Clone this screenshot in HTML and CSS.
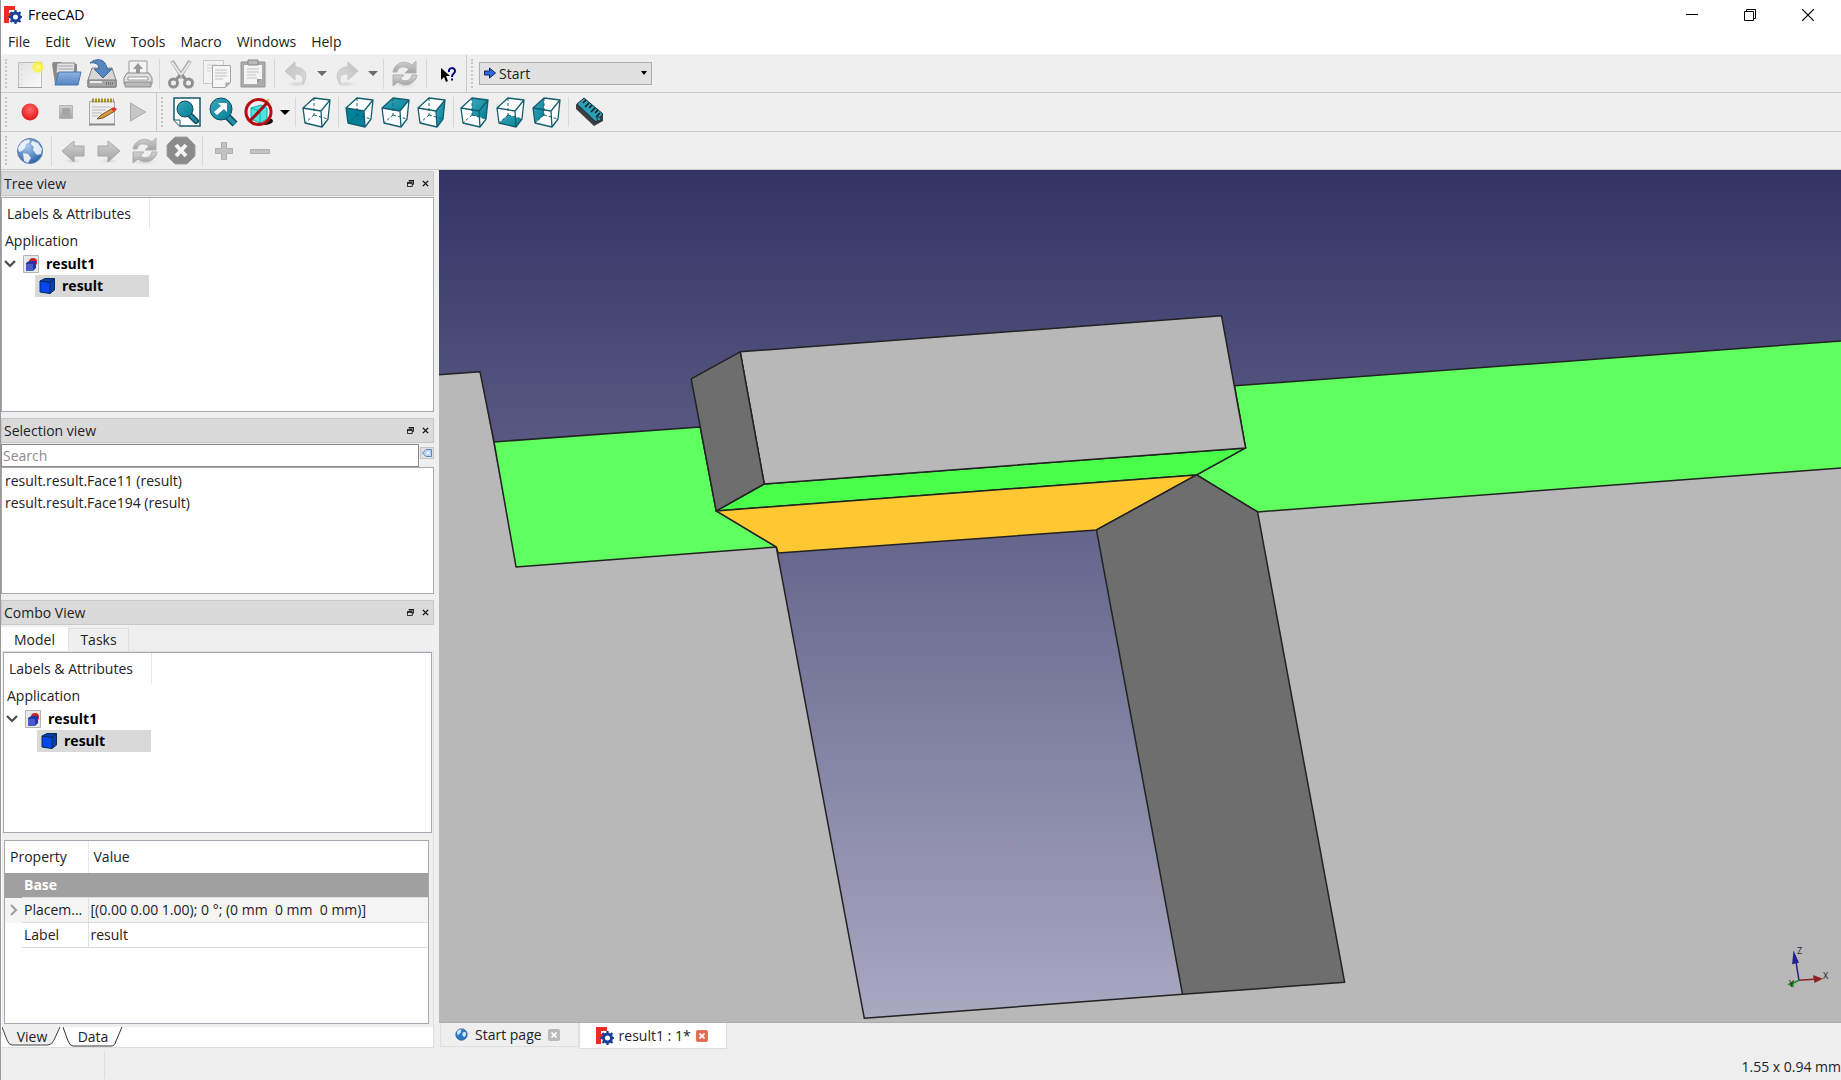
FILE: index.html
```
<!DOCTYPE html>
<html lang="en">
<head>
    <meta charset="UTF-8">
    <meta name="viewport" content="width=device-width, initial-scale=1.0">
    <title>FreeCAD</title>
    <link rel="stylesheet" href="styles.css">
</head>
<body>
    <!-- Shared icons -->
    <svg class="sprite" width="0" height="0" aria-hidden="true">
        <defs>
            <linearGradient id="grey" x1="0" y1="0" x2="0" y2="1"><stop offset="0" stop-color="#d2d2d2"/><stop offset="1" stop-color="#a2a2a2"/></linearGradient>
            <linearGradient id="light" x1="0" y1="0" x2="1" y2="1"><stop offset="0" stop-color="#c0c0c0"/><stop offset="1" stop-color="#dedede"/></linearGradient>
            <linearGradient id="pale" x1="0" y1="0" x2="1" y2="1"><stop offset="0" stop-color="#e2e2e2"/><stop offset="1" stop-color="#fafafa"/></linearGradient>
            <linearGradient id="blue" x1="0" y1="0" x2="0" y2="1"><stop offset="0" stop-color="#8ab4e2"/><stop offset="1" stop-color="#5585c2"/></linearGradient>
            <linearGradient id="teal" x1="0" y1="0" x2="1" y2="1"><stop offset="0" stop-color="#3ea6bc"/><stop offset="1" stop-color="#007f95"/></linearGradient>
            <radialGradient id="red" cx=".5" cy=".35" r=".6"><stop offset="0" stop-color="#ff6a6a"/><stop offset="1" stop-color="#e21c20"/></radialGradient>
            <radialGradient id="sun"><stop offset="0" stop-color="#fffcb0"/><stop offset=".5" stop-color="#fbf13a"/><stop offset="1" stop-color="#fbf13a" stop-opacity="0"/></radialGradient>
            <radialGradient id="shade"><stop offset="0" stop-color="#cfcfcf"/><stop offset="1" stop-color="#efefef" stop-opacity="0"/></radialGradient>
            <radialGradient id="sea" cx=".4" cy=".3" r=".7"><stop offset="0" stop-color="#a9c8ec"/><stop offset="1" stop-color="#2f66ad"/></radialGradient>
        </defs>
        <symbol id="logo" viewBox="0 0 18 18">
            <path d="M0 0h11v4H5v3h4v4H5v6H0z" fill="#f02a1c"/>
            <circle cx="11.500" cy="11" r="4" fill="none" stroke="#1a3f9c" stroke-width="3"/>
            <path d="M11.500 4v3M11.500 15v3M4.500 11h3M15.500 11h3M6.500 6l2 2M14.500 14l2 2M6.500 16l2-2M14.500 8l2-2" stroke="#1a3f9c" stroke-width="2.200"/>
        </symbol>
        <symbol id="cube-body" viewBox="0 0 32 32"><path d="M2 12 13 2 29 4 27 23 21 31 4 27z" fill="#fff"/></symbol>
        <symbol id="cube" viewBox="0 0 32 32">
            <path d="M13 19 4 27M13 19l14 4M13 2v17" fill="none" stroke="#135e6e" stroke-dasharray="3 2"/>
            <path d="M2 12 20 15 21 31 4 27zM2 12 13 2 29 4 20 15M29 4 27 23 21 31" fill="none" stroke="#135e6e" stroke-width="1.300" stroke-linejoin="round"/>
        </symbol>
        <symbol id="refresh" viewBox="0 0 32 32">
            <ellipse cx="16" cy="27" rx="14" ry="4" fill="url(#shade)"/>
            <path d="M4 14C5 6 15 1 23 7l4-4v12H16l4-4c-6-4-11-2-12 3z" fill="url(#grey)" stroke="#b4b4b4"/>
            <path d="M28 17c-1 8-11 13-19 7l-5 4V17h11l-4 4c6 4 11 1 12-4z" fill="url(#grey)" stroke="#aeaeae"/>
        </symbol>
        <symbol id="undo" viewBox="0 0 32 32">
            <ellipse cx="17" cy="26" rx="13" ry="4" fill="url(#shade)"/>
            <path d="M5 13 15 4v5c11 0 14 10 7 18 3-8 0-12-7-11v6z" fill="url(#light)" stroke="#c6c6c6"/>
        </symbol>
        <symbol id="arrow" viewBox="0 0 32 32">
            <ellipse cx="16" cy="26" rx="11" ry="3" fill="url(#shade)"/>
            <path d="M5 16 17 6v5h10v10H17v6z" fill="url(#grey)" stroke="#a6a6a6"/>
        </symbol>
        <symbol id="globe" viewBox="0 0 32 32">
            <circle cx="16" cy="16" r="12.500" fill="url(#sea)" stroke="#5d7fae"/>
            <path d="M7 8c3-3 7-4 9-3l-1 3-3 1-1 4-3 3-3 1-1-4zM18 6l6 2 4 6-1 5-4 1-4-5 1-3-3-3zM9 18l5 1 3 4-3 5-4-2z" fill="#f3f7fb" opacity=".9"/>
        </symbol>
        <symbol id="globe-small" viewBox="0 0 16 16">
            <circle cx="8" cy="8" r="6" fill="#2c78c4" stroke="#2a5a9c"/>
            <path d="M3 5c2-2 4-3 5-2l-1 3-3 3zM9 6l3-1 1 3-2 3-2-2z" fill="#cfe6fa"/>
        </symbol>
        <symbol id="float" viewBox="0 0 8 8">
            <path d="M2 .500h5.500V5H6M.500 3H6v4.500H.500z" fill="none" stroke="#111"/><path d="M2 1h6M0 3.500h6" stroke="#111" stroke-width="1.500"/>
        </symbol>
        <symbol id="close" viewBox="0 0 8 8"><path d="M1 1l6 6M7 1 1 7" stroke="#111" stroke-width="1.600"/></symbol>
        <symbol id="chevron" viewBox="0 0 12 12"><path d="M1 3l5 5 5-5" fill="none" stroke="#4a4a4a" stroke-width="2.200"/></symbol>
        <symbol id="document" viewBox="0 0 16 18">
            <path d="M.500.500h15v17H.500z" fill="#e8e8e8" stroke="#b4b4b4"/>
            <circle cx="10" cy="7" r="4" fill="#cc2222"/><path d="M3 8l3-2h7v7l-3 3H3z" fill="#2734a0"/><path d="M3 9h7v7H3z" fill="#4a59cc"/>
        </symbol>
        <symbol id="solid" viewBox="0 0 16 16">
            <path d="M1 3l5-2.500h9.500V12L11 15.500 1 14z" fill="#0a3fae"/><path d="M1 3.500 11 4.500V15.500L1 14z" fill="#0546f0"/><path d="M1 3l5-2.500h9.500L11 4.500zM15.500.500V12L11 15.500V4.500M1 3v11l10 1.500" fill="none" stroke="#062a52"/>
        </symbol>
    </svg>

    <div class="window">
        <header class="title-bar">
            <svg class="app-logo"><use href="#logo"/></svg>
            <span class="app-name">FreeCAD</span>
            <div class="window-buttons">
                <button aria-label="Minimize"><svg width="12" height="12"><path d="M0 5.500h12" stroke="#000"/></svg></button>
                <button aria-label="Restore"><svg width="12" height="12"><path d="M.500 2.500h9v9h-9zM2.500 2.500v-2h9v9h-2" fill="none" stroke="#000"/></svg></button>
                <button aria-label="Close"><svg width="12" height="12"><path d="M0 0l12 12M12 0 0 12" stroke="#000" stroke-width="1.200"/></svg></button>
            </div>
        </header>

        <nav class="menu-bar">
            <button>File</button>
            <button>Edit</button>
            <button>View</button>
            <button>Tools</button>
            <button>Macro</button>
            <button>Windows</button>
            <button>Help</button>
        </nav>

        <div class="toolbar-row">
            <div class="toolbar">
                <button class="tool" aria-label="New"><svg viewBox="0 0 32 32"><path d="M4.500 4.500h23v25h-23z" fill="url(#pale)" stroke="#bdbdbd"/><path d="M4 29.500h24" stroke="#a0a0a0"/><path d="M7.500 6v22" stroke="#cfcfcf" stroke-dasharray="1 4"/><circle cx="24" cy="9" r="7" fill="url(#sun)"/></svg></button>
                <button class="tool" aria-label="Open"><svg viewBox="0 0 32 32"><path d="M2 6l1-2h8l1 2h15v20H5z" fill="#8a8a8a"/><path d="M7 5h18l-1 10H6z" fill="#e6e6e6" stroke="#888"/><path d="M8 8h15M8 11h15" stroke="#a0a0a0"/><path d="M9 14h22l-3 13H5z" fill="url(#blue)" stroke="#4b77b0"/></svg></button>
                <button class="tool" aria-label="Save"><svg viewBox="0 0 32 32"><path d="M6 10h20l4 12v7H2v-7z" fill="#d6d6d6" stroke="#808080"/><path d="M2 22h28v7H2z" fill="#a8a8a8" stroke="#777"/><path d="M4 24h12" stroke="#eee" stroke-width="2"/><path d="M20 25.500h8" stroke="#777" stroke-width="3" stroke-dasharray="1 1"/><path d="M4 5c7-6 16-4 17 6h5l-9 9-9-9h5C13 6 9 4 4 5z" fill="#5586bd" stroke="#3b689f"/></svg></button>
                <button class="tool" aria-label="Print"><svg viewBox="0 0 32 32"><path d="M7 3h18v13H7z" fill="#f4f4f4" stroke="#999"/><path d="M16 5l5 6h-3v5h-4v-5h-3z" fill="#999"/><path d="M5 15h22l3 5v6H2v-6z" fill="#e0e0e0" stroke="#8a8a8a"/><path d="M6 19h20v3H6z" fill="#fff" stroke="#999"/><path d="M3 24h26v5H3z" fill="#b8b8b8" stroke="#8f8f8f"/></svg></button>
                <span class="separator"></span>
                <button class="tool" aria-label="Cut"><svg viewBox="0 0 32 32"><path d="M7 3l11 17M25 3 14 20" stroke="#aaa" stroke-width="4"/><path d="M7 4l11 16M25 4 14 20" stroke="#e8e8e8" stroke-width="2"/><circle cx="8.500" cy="25" r="4" fill="none" stroke="#8f8f8f" stroke-width="3"/><circle cx="23.500" cy="25" r="4" fill="none" stroke="#8f8f8f" stroke-width="3"/><path d="M11 22l4-5M21 22l-4-5" stroke="#8f8f8f" stroke-width="3"/></svg></button>
                <button class="tool" aria-label="Copy"><svg viewBox="0 0 32 32"><path d="M2.500 2.500h20v23h-20z" fill="#f3f3f3" stroke="#cacaca"/><path d="M6 7h10M6 10h6M6 13h4" stroke="#d0d0d0"/><path d="M11.500 7.500h18v17l-5 5h-13z" fill="#f5f5f5" stroke="#a5a5a5"/><path d="M14 12h12M14 15h12M14 18h12M14 21h8" stroke="#c0c0c0"/><path d="M24.500 29.500v-5h5z" fill="#aaa"/></svg></button>
                <button class="tool" aria-label="Paste"><svg viewBox="0 0 32 32"><path d="M4 4h24v25H4z" fill="#ababab" stroke="#959595"/><path d="M7 7h18v14l-5 5H7z" fill="#f4f4f4"/><path d="M11 2h10v5H11z" fill="#b9b9b9" stroke="#888"/><path d="M10 11h12M10 14h12M10 17h9M10 20h10" stroke="#c2c2c2"/><path d="M20 26v-5h5z" fill="#999"/></svg></button>
                <span class="separator"></span>
                <button class="tool" aria-label="Undo"><svg><use href="#undo"/></svg></button>
                <button class="drop disabled" aria-label="Undo list"></button>
                <button class="tool" aria-label="Redo"><svg class="flip"><use href="#undo"/></svg></button>
                <button class="drop disabled" aria-label="Redo list"></button>
                <span class="separator"></span>
                <button class="tool" aria-label="Refresh"><svg><use href="#refresh"/></svg></button>
                <span class="separator"></span>
                <button class="tool" aria-label="What's this"><svg viewBox="0 0 32 32"><path d="M9 10v12l3-3 2 5 2-1-2-5h4z" fill="#000"/><path d="M17 14c-1-5 6-5 6-1 0 3-3 2-3 6M20 20.500v2" fill="none" stroke="#000080" stroke-width="2"/></svg></button>
            </div>
            <div class="toolbar">
                <div class="workbench">
                    <svg viewBox="0 0 12 12"><path d="M.500 4h5V1l6 5-6 5V8h-5z" fill="#2a68e8" stroke="#0b2358"/></svg>
                    <select aria-label="Workbench"><option>Start</option></select>
                </div>
            </div>
        </div>

        <div class="toolbar-row">
            <div class="toolbar">
                <button class="tool" aria-label="Record macro"><svg viewBox="0 0 32 32"><circle cx="16" cy="16" r="8.500" fill="url(#red)"/></svg></button>
                <button class="tool" aria-label="Stop macro"><svg viewBox="0 0 32 32"><path d="M9.500 9.500h13v13h-13z" fill="url(#grey)" stroke="#b5b5b5"/><path d="M12 12h8v8h-8z" fill="#a5a5a5"/></svg></button>
                <button class="tool" aria-label="Macros"><svg viewBox="0 0 32 32"><path d="M3.500 5.500h25v23h-25z" fill="#eee" stroke="#aaa"/><path d="M3 28.500h26" stroke="#888" stroke-width="2"/><path d="M6 4.500h22" stroke="#a39324" stroke-width="4" stroke-dasharray="2 1"/><path d="M6 11h18M6 14h14M6 17h10M6 20h6" stroke="#bbb"/><path d="M11 23l4-4 12-7 2 3-12 7z" fill="#d99a45" stroke="#7d5520"/><path d="M25 13l3-2 3 2-3 3z" fill="#e5352c"/></svg></button>
                <button class="tool" aria-label="Run macro"><svg viewBox="0 0 32 32"><path d="M8.500 7v18l15-9z" fill="#c6c6c6" stroke="#a9a9a9"/></svg></button>
            </div>
            <div class="toolbar">
                <button class="tool" aria-label="Fit all"><svg viewBox="0 0 32 32"><path d="M3 2h26v28H9l-6-6z" fill="#fff" stroke="#14576a" stroke-width="1.500"/><path d="M3 24h6v6" fill="#fff" stroke="#14576a"/><path d="M19 19l6 6" stroke="#0d4c5d" stroke-width="6" stroke-linecap="round"/><path d="M20 20l5 5" stroke="#1f90a8" stroke-width="3" stroke-linecap="round"/><circle cx="14" cy="13" r="8" fill="url(#teal)" stroke="#0d4c5d"/></svg></button>
                <button class="tool" aria-label="Fit selection"><svg viewBox="0 0 32 32"><path d="M20 20l8 8" stroke="#0d4c5d" stroke-width="7"/><path d="M21 21l7 7" stroke="#1f90a8" stroke-width="4"/><circle cx="14" cy="13" r="11" fill="url(#teal)" stroke="#0d4c5d"/><path d="M20 7v9l-3-3-7 6-3-3 7-6-3-3z" fill="#fff"/></svg></button>
                <button class="tool" aria-label="Draw style"><svg viewBox="0 0 32 32"><ellipse cx="21" cy="25" rx="9" ry="4" fill="#111"/><circle cx="16" cy="16" r="12" fill="#efefef"/><path d="M8 12l10-3 6 3v11l-7 4-9-4z" fill="#4ce5e0" stroke="#1ba6a8"/><path d="M8 12l9 3v12" fill="none" stroke="#1ba6a8"/><path d="M20 11l6-8" stroke="#f0c526" stroke-width="2"/><circle cx="15.500" cy="16" r="12.500" fill="none" stroke="#b80d14" stroke-width="3"/><path d="M7 25 24 7" stroke="#a30e14" stroke-width="3"/></svg></button>
                <button class="drop" aria-label="Draw style list"></button>
                <span class="separator"></span>
                <button class="tool" aria-label="Axonometric"><svg viewBox="0 0 32 32"><use href="#cube-body"/><use href="#cube"/></svg></button>
                <span class="separator"></span>
                <button class="tool" aria-label="Front"><svg viewBox="0 0 32 32"><use href="#cube-body"/><path d="M2 12 20 15 21 31 4 27z" fill="#008199"/><use href="#cube"/></svg></button>
                <button class="tool" aria-label="Top"><svg viewBox="0 0 32 32"><use href="#cube-body"/><path d="M2 12 13 2 29 4 20 15z" fill="url(#teal)"/><use href="#cube"/></svg></button>
                <button class="tool" aria-label="Right"><svg viewBox="0 0 32 32"><use href="#cube-body"/><path d="M29 4 27 23 21 31 20 15z" fill="url(#teal)"/><use href="#cube"/></svg></button>
                <span class="separator"></span>
                <button class="tool" aria-label="Rear"><svg viewBox="0 0 32 32"><use href="#cube-body"/><path d="M13 2 29 4 27 23 13 19z" fill="url(#teal)"/><use href="#cube"/></svg></button>
                <button class="tool" aria-label="Bottom"><svg viewBox="0 0 32 32"><use href="#cube-body"/><path d="M13 19 27 23 21 31 4 27z" fill="url(#teal)"/><use href="#cube"/></svg></button>
                <button class="tool" aria-label="Left"><svg viewBox="0 0 32 32"><use href="#cube-body"/><path d="M2 12 13 2V19L4 27z" fill="url(#teal)"/><use href="#cube"/></svg></button>
                <span class="separator"></span>
                <button class="tool" aria-label="Measure"><svg viewBox="0 0 32 32"><path d="M2 8v5l18 17 9-5v-7z" fill="#3a3f41"/><path d="M3 8l7-6 19 16-7 8z" fill="#2ba0b8" stroke="#1c2c30"/><path d="M12 4l-3 3M15 7l-4 4M18 9l-3 3M21 12l-4 4M24 14l-3 3M26 17l-4 4" stroke="#101a1c" stroke-width="1.500"/><circle cx="25" cy="23" r="2" fill="#2ba0b8" stroke="#1c2c30"/></svg></button>
            </div>
        </div>

        <div class="toolbar-row">
            <div class="toolbar">
                <button class="tool" aria-label="Start page"><svg><use href="#globe"/></svg></button>
                <span class="separator"></span>
                <button class="tool" aria-label="Back"><svg><use href="#arrow"/></svg></button>
                <button class="tool" aria-label="Forward"><svg class="flip"><use href="#arrow"/></svg></button>
                <button class="tool" aria-label="Reload"><svg><use href="#refresh"/></svg></button>
                <button class="tool" aria-label="Stop"><svg viewBox="0 0 32 32"><path d="M10 2h12l8 8v11l-8 8H10l-8-8V10z" fill="#8b8b8b" stroke="#a0a0a0"/><path d="M11 10l10 11M21 10 11 21" stroke="#f5f5f5" stroke-width="4"/></svg></button>
                <span class="separator"></span>
                <button class="tool" aria-label="Zoom in"><svg viewBox="0 0 32 32"><path d="M13.500 7.500h5v6h6v5h-6v6h-5v-6h-6v-5h6z" fill="#c2c2c2" stroke="#b0b0b0"/></svg></button>
                <button class="tool" aria-label="Zoom out"><svg viewBox="0 0 32 32"><path d="M6.500 14.500h19v4h-19z" fill="#c2c2c2" stroke="#b0b0b0"/></svg></button>
            </div>
        </div>

        <main class="workspace">
            <aside class="docks">
                <section class="dock tree-dock">
                    <div class="dock-title"><h2>Tree view</h2><button aria-label="Float"><svg><use href="#float"/></svg></button><button aria-label="Close"><svg><use href="#close"/></svg></button></div>
                    <div class="tree">
                        <div class="tree-header">Labels &amp; Attributes</div>
                        <ul>
                            <li class="root">Application</li>
                            <li class="file"><svg class="toggle"><use href="#chevron"/></svg><svg class="doc-icon"><use href="#document"/></svg>result1</li>
                            <li class="item"><svg class="solid-icon"><use href="#solid"/></svg>result</li>
                        </ul>
                    </div>
                </section>

                <section class="dock selection-dock">
                    <div class="dock-title"><h2>Selection view</h2><button aria-label="Float"><svg><use href="#float"/></svg></button><button aria-label="Close"><svg><use href="#close"/></svg></button></div>
                    <div class="search">
                        <input type="text" placeholder="Search" aria-label="Search">
                        <button aria-label="Clear"><svg viewBox="0 0 10 8"><path d="M.500 4 4 .500h5.500v7H4z" fill="#b9d2ef" stroke="#5b87bf"/><path d="M4.500 2.500l3 3M7.500 2.500l-3 3" stroke="#fff"/></svg></button>
                    </div>
                    <ul class="selection-list">
                        <li>result.result.Face11 (result)</li>
                        <li>result.result.Face194 (result)</li>
                    </ul>
                </section>

                <section class="dock combo-dock">
                    <div class="dock-title"><h2>Combo View</h2><button aria-label="Float"><svg><use href="#float"/></svg></button><button aria-label="Close"><svg><use href="#close"/></svg></button></div>
                    <div class="combo-tabs">
                        <button class="active">Model</button>
                        <button>Tasks</button>
                    </div>
                    <div class="combo-page">
                        <div class="tree">
                            <div class="tree-header">Labels &amp; Attributes</div>
                            <ul>
                                <li class="root">Application</li>
                                <li class="file"><svg class="toggle"><use href="#chevron"/></svg><svg class="doc-icon"><use href="#document"/></svg>result1</li>
                                <li class="item"><svg class="solid-icon"><use href="#solid"/></svg>result</li>
                            </ul>
                        </div>
                        <div class="properties">
                            <table>
                                <colgroup><col class="col-toggle"><col class="col-name"><col></colgroup>
                                <thead>
                                    <tr><th colspan="2">Property</th><th>Value</th></tr>
                                </thead>
                                <tbody>
                                    <tr class="group"><td></td><td colspan="2">Base</td></tr>
                                    <tr class="odd"><td class="expand"><svg viewBox="0 0 12 12"><path d="M3 1l5 5-5 5" fill="none" stroke="#a0a0a0" stroke-width="2"/></svg></td><td>Placem...</td><td class="value">[(0.00 0.00 1.00); 0 °; (0 mm  0 mm  0 mm)]</td></tr>
                                    <tr><td></td><td>Label</td><td class="value">result</td></tr>
                                </tbody>
                            </table>
                        </div>
                        <div class="property-tabs">
                            <button><svg viewBox="0 0 60 20" preserveAspectRatio="none"><path d="M0 0l5 13q2 5 5 5h36q4 0 6-5l6-13" fill="#efefef" stroke="#444"/></svg><span>View</span></button>
                            <button><svg viewBox="0 0 60 20" preserveAspectRatio="none"><path d="M0 0l5 14q2 5 5 5h38q4 0 5-5l6-14" fill="#fff" stroke="#333"/></svg><span>Data</span></button>
                        </div>
                    </div>
                </section>
            </aside>

            <section class="document">
                <!-- 3D view -->
                <svg class="viewport" viewBox="440 170 1401 853" preserveAspectRatio="xMidYMid slice" role="img" aria-label="3D view">
                    <defs>
                        <linearGradient id="sky" gradientUnits="userSpaceOnUse" x1="0" y1="170" x2="0" y2="1023"><stop offset="0" stop-color="#333365"/><stop offset="1" stop-color="#a9a9c2"/></linearGradient>
                    </defs>
                    <rect x="440" y="170" width="1401" height="853" fill="url(#sky)"/>
                    <path d="M439 375 481 372 517 567 777 547 865 1018 1345 982 1258 511 1841 468V1023H439z" fill="#b8b8b8"/>
                    <g stroke="#222" stroke-width="1.500" stroke-linejoin="round">
                        <path d="M439 375 481 372 495 442" fill="none"/>
                        <path d="M495 442 701 427 717 511 777 547 517 567z" fill="#5fff5f"/>
                        <path d="M1235 386 1842 341V468L1258 512 1197 475 1246 448z" fill="#5fff5f"/>
                        <path d="M717 511 765 484 1246 448 1197 475z" fill="#4aff4a"/>
                        <path d="M717 511 1197 475 1097 530 779 553 777 547z" fill="#ffc832"/>
                        <path d="M741 352 1222 316 1246 448 765 484z" fill="#b8b8b8"/>
                        <path d="M692 379 741 352 765 484 717 511z" fill="#6e6e6e"/>
                        <path d="M1197 475 1258 512 1345 982 1183 994 1097 530z" fill="#6e6e6e"/>
                        <path d="M777 547 865 1018 1183 994" fill="none"/>
                    </g>
                    <path d="M439 1022.500h1402" stroke="#aaa"/>
                    <!-- Axis cross -->
                    <g stroke-width="1.500">
                        <path d="M1799 980 1795 955" stroke="#22228c"/><path d="M1794 953l4 9-5 1z" fill="#22228c" stroke="#22228c"/>
                        <path d="M1799 980l22-1.500" stroke="#8c2222"/><path d="M1814 976l7 2.500-6 3z" fill="#8c2222" stroke="#8c2222"/>
                        <path d="M1799 980l-8 4" stroke="#228c22"/><path d="M1789 984l4-2v4z" fill="#228c22" stroke="#228c22"/>
                    </g>
                    <g class="axis-label">
                        <text x="1797" y="954">Z</text>
                        <text x="1823" y="979">X</text>
                        <text x="1789" y="987">Y</text>
                    </g>
                </svg>
                <div class="document-tabs">
                    <div class="doc-tab">
                        <svg class="tab-icon"><use href="#globe-small"/></svg>
                        <a href="#">Start page</a>
                        <button class="tab-close" aria-label="Close Start page"><svg viewBox="0 0 6 6"><path d="M.500.500l5 5M5.500.500l-5 5" stroke="#fff" stroke-width="1.600"/></svg></button>
                    </div>
                    <div class="doc-tab active">
                        <svg class="tab-icon"><use href="#logo"/></svg>
                        <a href="#">result1 : 1*</a>
                        <button class="tab-close" aria-label="Close result1"><svg viewBox="0 0 6 6"><path d="M.500.500l5 5M5.500.500l-5 5" stroke="#fff" stroke-width="1.600"/></svg></button>
                    </div>
                </div>
            </section>
        </main>

        <footer class="status-bar">
            <span class="status-message"></span>
            <span class="dimensions">1.55 x 0.94 mm</span>
        </footer>
    </div>
</body>
</html>
```
FILE: styles.css
```
* {
    box-sizing: border-box;
}

html, body {
    margin: 0;
    height: 100%;
}

body {
    background-color: #efefef;
    color: #222;
    font-family: "Open Sans", "Noto Sans", sans-serif;
    font-size: 14px;
    line-height: 20px;
}

button, input, select {
    margin: 0;
    padding: 0;
    border: none;
    background: none;
    color: inherit;
    font: inherit;
}

ul {
    margin: 0;
    padding: 0;
    list-style: none;
}

svg {
    display: block;
}

.sprite {
    position: absolute;
}

.window {
    display: flex;
    flex-direction: column;
    height: 100vh;
    border-left: 1px solid #999;
    overflow: hidden;
}

/* Title and menu */
.title-bar {
    display: flex;
    align-items: center;
    height: 29px;
    padding-left: 3px;
    background-color: white;
    color: black;
}

.app-logo {
    width: 18px;
    height: 18px;
    margin-right: 6px;
}

.window-buttons {
    display: flex;
    height: 100%;
    margin-left: auto;
    padding-right: 4px;
}

.window-buttons button {
    display: flex;
    align-items: center;
    justify-content: center;
    width: 58px;
}

.menu-bar {
    display: flex;
    gap: 15px;
    height: 26px;
    padding: 0 7px;
    background-color: white;
    border-bottom: 1px solid #f5f5f5;
}

.menu-bar button {
    height: 26px;
}

/* Toolbars */
.toolbar-row {
    display: flex;
    height: 38px;
    border-bottom: 1px solid #c9c9c9;
}

.toolbar-row:nth-of-type(2) {
    height: 39px;
}

.toolbar {
    display: flex;
    align-items: center;
    padding-left: 11px;
    position: relative;
}

.toolbar::before {
    content: "";
    position: absolute;
    left: 4px;
    top: 4px;
    bottom: 4px;
    border-left: 2px dotted #c4c4c4;
}

.toolbar + .toolbar {
    padding-left: 12px;
    border-left: 1px solid #c9c9c9;
}

.tool {
    width: 36px;
    height: 36px;
    padding: 2px;
}

.tool svg {
    width: 32px;
    height: 32px;
}

.flip {
    transform: scaleX(-1);
}

.drop {
    display: flex;
    align-items: center;
    justify-content: center;
    width: 15px;
    height: 36px;
}

.drop::before {
    content: "";
    border: 5px solid transparent;
    border-top-color: black;
    border-bottom: none;
}

.drop.disabled::before {
    border-top-color: #6b6b6b;
}

.separator {
    width: 7px;
    height: 30px;
    background: linear-gradient(#d8d8d8, #d8d8d8) center / 1px 100% no-repeat;
}

.workbench {
    position: relative;
    width: 173px;
}

.workbench svg {
    position: absolute;
    left: 5px;
    top: 5px;
    width: 12px;
    height: 12px;
}

.workbench::after {
    content: "";
    position: absolute;
    right: 5px;
    top: 9px;
    border: 3px solid transparent;
    border-top: 4px solid black;
    border-bottom: none;
}

.workbench select {
    display: block;
    appearance: none;
    width: 100%;
    height: 23px;
    padding-left: 19px;
    background-color: #e1e1e1;
    border: 1px solid #adadad;
    line-height: 20px;
}

/* Docks */
.workspace {
    display: flex;
    flex: 1;
    min-height: 0;
}

.docks {
    display: flex;
    flex-direction: column;
    gap: 6px;
    width: 438px;
    padding: 1px 5px 2px 0;
}

.dock {
    display: flex;
    flex-direction: column;
    min-height: 0;
}

.tree-dock {
    flex: 241;
}

.selection-dock {
    flex: 176;
}

.combo-dock {
    flex: 448;
}

.dock-title {
    display: flex;
    align-items: center;
    flex: none;
    height: 25px;
    padding: 0 0 0 2px;
    background-color: #dadada;
    border: 1px solid #c8c8c8;
}

.dock-title h2 {
    flex: 1;
    margin: 0;
    font-size: 14px;
    font-weight: normal;
}

.dock-title button {
    width: 15px;
    height: 16px;
    padding: 4px;
}

.dock-title svg {
    width: 7px;
    height: 7px;
}

.tree {
    flex: 1;
    margin-top: 1px;
    background-color: white;
    border: 1px solid #a5a8b0;
    overflow: hidden;
}

.tree-header {
    width: 148px;
    height: 31px;
    padding: 0 5px;
    border-right: 1px solid #e8e8e8;
    line-height: 32px;
}

.tree li {
    display: flex;
    align-items: center;
    height: 22px;
}

.tree .root {
    padding-left: 3px;
    height: 24px;
}

.tree .file {
    padding-left: 2px;
    color: black;
    font-weight: bold;
}

.tree .item {
    width: 114px;
    margin-left: 33px;
    padding-left: 4px;
    background-color: #d9d9d9;
    color: black;
    font-weight: bold;
}

.toggle {
    width: 12px;
    height: 12px;
}

.doc-icon {
    width: 16px;
    height: 18px;
    margin: 0 7px;
}

.solid-icon {
    width: 16px;
    height: 16px;
    margin-right: 7px;
}

.search {
    display: flex;
    align-items: flex-start;
    gap: 1px;
    margin-top: 1px;
}

.search input {
    flex: 1;
    height: 23px;
    padding: 0 1px;
    background-color: white;
    border: 1px solid #8a8a8a;
}

.search input::placeholder {
    color: #8c8c8c;
}

.search button {
    width: 14px;
    height: 12px;
    margin-top: 3px;
    padding: 1px;
    background-color: #e1e1e1;
    border: 1px solid #c4c4c4;
}

.search svg {
    width: 10px;
    height: 8px;
}

.selection-list {
    flex: 1;
    padding: 2px 3px;
    background-color: white;
    border: 1px solid #a5a8b0;
}

.selection-list li {
    line-height: 22px;
}

.combo-tabs {
    display: flex;
    align-items: flex-end;
    height: 26px;
}

.combo-tabs button {
    width: 61px;
    height: 23px;
    border: 1px solid #dedede;
    border-bottom: none;
}

.combo-tabs .active {
    width: 67px;
    height: 24px;
    background-color: white;
    border-color: white;
}

.combo-page {
    display: flex;
    flex: 1;
    flex-direction: column;
    min-height: 0;
    border: 1px solid #dedede;
    border-left-color: white;
}

.combo-page .tree {
    flex: 181;
    margin: 0 1px 7px 1px;
}

.properties {
    flex: 185;
    min-height: 0;
    margin: 0 4px 3px 2px;
    background-color: white;
    border: 1px solid #a5a8b0;
}

table {
    width: 100%;
    border-collapse: collapse;
    table-layout: fixed;
}

.col-toggle {
    width: 17px;
}

.col-name {
    width: 66px;
}

th {
    height: 32px;
    padding: 0 5px;
    border-right: 1px solid #e8e8e8;
    font-weight: normal;
    text-align: left;
}

th:last-child {
    border-right: none;
}

td {
    height: 25px;
    padding: 0 2px;
    border-bottom: 1px solid #dcdcdc;
    white-space: pre;
}

td:first-child {
    padding: 0;
    border-bottom: none;
}

.value {
    border-left: 1px solid #e0e0e0;
}

.group td {
    background-color: #a0a0a0;
    color: white;
    font-weight: bold;
}

.odd td {
    background-color: #f5f5f5;
}

.expand svg {
    width: 12px;
    height: 12px;
    margin-left: 3px;
}

.property-tabs {
    display: flex;
    gap: 1px;
    height: 20px;
    background-color: white;
}

.property-tabs button {
    position: relative;
    width: 60px;
    height: 20px;
    line-height: 18px;
}

.property-tabs svg {
    position: absolute;
    inset: 0;
    width: 60px;
    height: 20px;
}

.property-tabs span {
    position: relative;
}

/* 3D view and its tabs */
.document {
    display: flex;
    flex: 1;
    flex-direction: column;
    min-width: 0;
}

.viewport {
    flex: 1;
    width: 100%;
    min-height: 0;
}

.axis-label {
    fill: #222;
    font-size: 9px;
}

.document-tabs {
    display: flex;
    align-items: flex-start;
    height: 27px;
    padding-left: 1px;
}

.doc-tab {
    display: flex;
    align-items: center;
    gap: 6px;
    height: 24px;
    padding: 0 18px 0 13px;
    border: 1px solid #dedede;
    border-top: none;
}

.doc-tab.active {
    height: 26px;
    gap: 5px;
    padding: 0 18px 0 16px;
    background-color: white;
}

.doc-tab a {
    color: inherit;
    text-decoration: none;
}

.tab-icon {
    width: 15px;
    height: 15px;
}

.active .tab-icon {
    width: 18px;
    height: 18px;
}

.tab-close {
    width: 12px;
    height: 12px;
    padding: 3px;
    background-color: #bababa;
    border-radius: 2px;
}

.active .tab-close {
    background-color: #e07055;
}

.tab-close svg {
    width: 6px;
    height: 6px;
}

/* Status bar */
.status-bar {
    display: flex;
    align-items: center;
    justify-content: space-between;
    height: 30px;
}

.status-message {
    width: 104px;
    height: 28px;
    border-right: 1px solid #dedede;
}

.dimensions {
    padding-top: 4px;
}
```
